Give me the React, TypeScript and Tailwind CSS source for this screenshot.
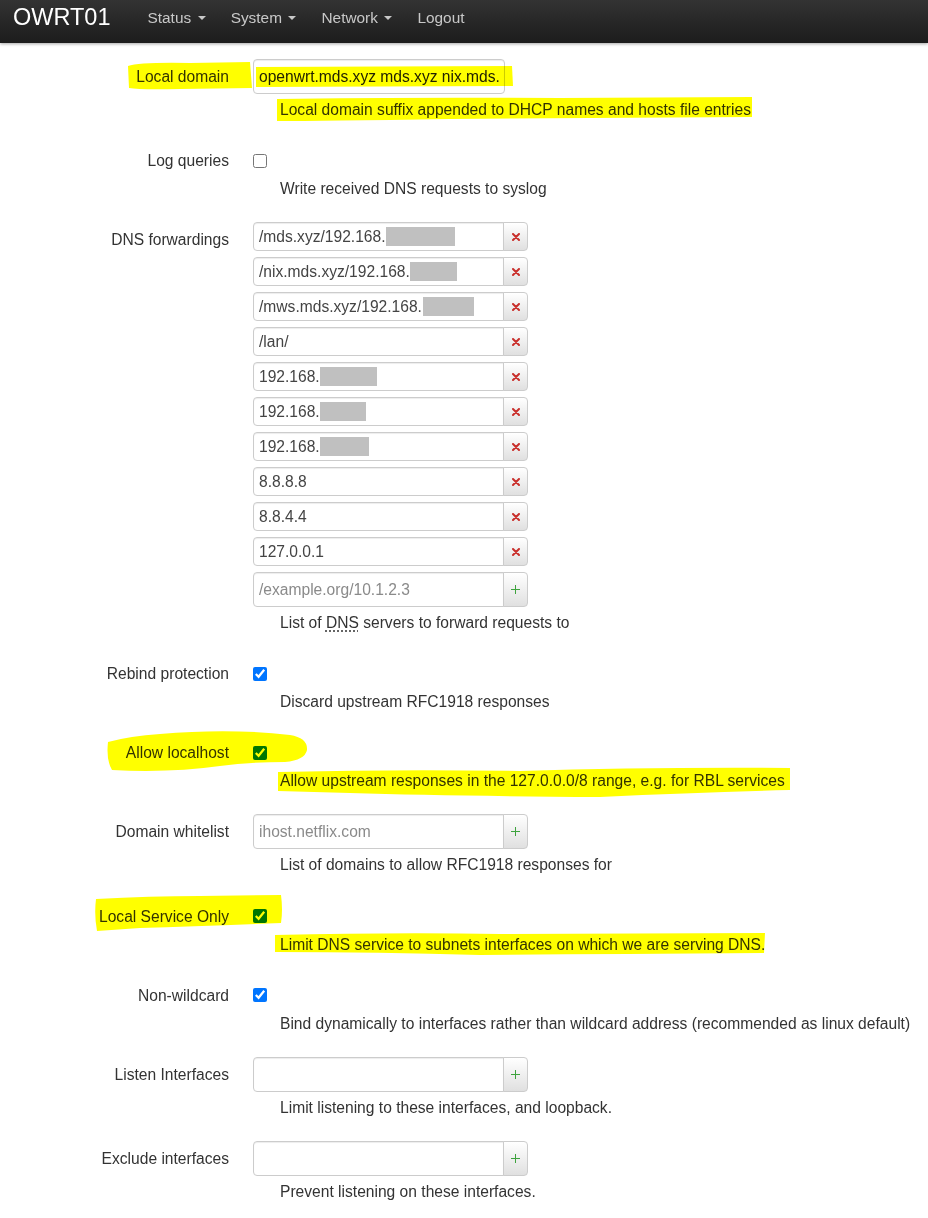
import React from "react";

const items: { text: string; block?: [number, number] }[] = [
    { text: "/mds.xyz/192.168.", block: [0, 69] },
    { text: "/nix.mds.xyz/192.168.", block: [0, 47] },
    { text: "/mws.mds.xyz/192.168.", block: [1, 51] },
    { text: "/lan/" },
    { text: "192.168.", block: [0, 57] },
    { text: "192.168.", block: [0, 46] },
    { text: "192.168.", block: [0, 49] },
    { text: "8.8.8.8" },
    { text: "8.8.4.4" },
    { text: "127.0.0.1" },
];

function RemoveIcon() {
    return (
        <svg width="8" height="8" viewBox="0 0 8 8">
            <path d="M1 1 L7 7 M7 1 L1 7" stroke="#c9302c" strokeWidth="2" strokeLinecap="round" />
        </svg>
    );
}

function AddIcon() {
    return (
        <svg width="9" height="9" viewBox="0 0 9 9" shapeRendering="crispEdges">
            <path d="M4 0 H5 V9 H4 Z M0 4 H9 V5 H0 Z" fill="#3ea33e" />
        </svg>
    );
}

function Btn({ add }: { add?: boolean }) {
    return (
        <div className="w-[25px] -ml-px flex items-center justify-center border border-[#ccc] rounded-r-[4px] bg-linear-to-b from-white to-[#e0e0e0]">
            {add ? <AddIcon /> : <RemoveIcon />}
        </div>
    );
}

function Field({
    children,
    tall,
    add,
    placeholder,
}: {
    children?: React.ReactNode;
    tall?: boolean;
    add?: boolean;
    placeholder?: string;
}) {
    return (
        <div className={`flex ${tall ? "h-[35px]" : "h-[29px]"}`}>
            <div className="w-[251px] flex items-center pl-[5px] border border-[#ccc] rounded-l-[4px] bg-white shadow-[inset_0_1px_1px_rgba(0,0,0,0.075)] text-[#444] whitespace-nowrap overflow-hidden">
                {placeholder ? <span className="text-[#8a8a8a]">{placeholder}</span> : children}
            </div>
            <Btn add={add} />
        </div>
    );
}

function Label({ children }: { children: React.ReactNode }) {
    return <div className="w-[229px] shrink-0 text-right leading-[35px] whitespace-nowrap">{children}</div>;
}

function Check({ checked }: { checked?: boolean }) {
    return (
        <div className="h-[35px] flex items-center">
            <input type="checkbox" defaultChecked={checked} className="w-[14px] h-[14px] m-0 accent-[#0075ff]" />
        </div>
    );
}

function Desc({ children, gap }: { children: React.ReactNode; gap?: boolean }) {
    return <div className={`pl-[280px] leading-[22px] whitespace-nowrap ${gap ? "mt-[5px]" : ""}`}>{children}</div>;
}

export default function App() {
    return (
        <div className="relative w-[928px] h-[1218px] overflow-hidden bg-white text-[#333] text-[15.6px] font-['Liberation_Sans',Arial,sans-serif]">
            <nav className="h-[43px] flex items-center pb-[8px] px-[13px] bg-linear-to-b from-[#333] to-[#1c1c1c] shadow-[0_1px_3px_rgba(0,0,0,0.35)]">
                <span className="text-white text-[23.5px] mr-[37px]">OWRT01</span>
                <div className="flex items-center gap-[25px] text-[15.4px] text-[#c8c8c8]">
                    {["Status", "System", "Network"].map((n) => (
                        <span key={n} className="flex items-center">
                            {n}
                            <span className="ml-[6.5px] mt-[2px] w-0 h-0 border-x-[4px] border-x-transparent border-t-[4px] border-t-[#c8c8c8]" />
                        </span>
                    ))}
                    <span>Logout</span>
                </div>
            </nav>

            <div className="flex flex-col gap-[22.1px] mt-[16px]">
                <div>
                    <div className="flex">
                        <Label>Local domain</Label>
                        <div className="ml-[24px] w-[252px] h-[35px] flex items-center pl-[5px] border border-[#ccc] rounded-[4px] shadow-[inset_0_1px_1px_rgba(0,0,0,0.075)] text-[#222] whitespace-nowrap overflow-hidden">
                            openwrt.mds.xyz mds.xyz nix.mds.
                        </div>
                    </div>
                    <Desc gap>Local domain suffix appended to DHCP names and hosts file entries</Desc>
                </div>

                <div>
                    <div className="flex">
                        <Label>Log queries</Label>
                        <div className="ml-[24px]">
                            <Check />
                        </div>
                    </div>
                    <Desc>Write received DNS requests to syslog</Desc>
                </div>

                <div>
                    <div className="flex">
                        <Label>DNS forwardings</Label>
                        <div className="ml-[24px] flex flex-col gap-[6px]">
                            {items.map((it, i) => (
                                <Field key={i}>
                                    {it.text}
                                    {it.block && (
                                        <span
                                            className="inline-block h-[19px] bg-[#c0c0c0]"
                                            style={{ marginLeft: it.block[0], width: it.block[1] }}
                                        />
                                    )}
                                </Field>
                            ))}
                            <Field tall add placeholder="/example.org/10.1.2.3" />
                        </div>
                    </div>
                    <Desc gap>
                        List of <span className="underline decoration-dotted underline-offset-[3px]">DNS</span> servers to forward requests to
                    </Desc>
                </div>

                <div>
                    <div className="flex">
                        <Label>Rebind protection</Label>
                        <div className="ml-[24px]">
                            <Check checked />
                        </div>
                    </div>
                    <Desc>Discard upstream RFC1918 responses</Desc>
                </div>

                <div>
                    <div className="flex">
                        <Label>Allow localhost</Label>
                        <div className="ml-[24px]">
                            <Check checked />
                        </div>
                    </div>
                    <Desc>Allow upstream responses in the 127.0.0.0/8 range, e.g. for RBL services</Desc>
                </div>

                <div>
                    <div className="flex">
                        <Label>Domain whitelist</Label>
                        <div className="ml-[24px]">
                            <Field tall add placeholder="ihost.netflix.com" />
                        </div>
                    </div>
                    <Desc gap>List of domains to allow RFC1918 responses for</Desc>
                </div>

                <div>
                    <div className="flex">
                        <Label>Local Service Only</Label>
                        <div className="ml-[24px]">
                            <Check checked />
                        </div>
                    </div>
                    <Desc>Limit DNS service to subnets interfaces on which we are serving DNS.</Desc>
                </div>

                <div>
                    <div className="flex">
                        <Label>Non-wildcard</Label>
                        <div className="ml-[24px]">
                            <Check checked />
                        </div>
                    </div>
                    <Desc>Bind dynamically to interfaces rather than wildcard address (recommended as linux default)</Desc>
                </div>

                <div>
                    <div className="flex">
                        <Label>Listen Interfaces</Label>
                        <div className="ml-[24px]">
                            <Field tall add />
                        </div>
                    </div>
                    <Desc gap>Limit listening to these interfaces, and loopback.</Desc>
                </div>

                <div>
                    <div className="flex">
                        <Label>Exclude interfaces</Label>
                        <div className="ml-[24px]">
                            <Field tall add />
                        </div>
                    </div>
                    <Desc gap>Prevent listening on these interfaces.</Desc>
                </div>
            </div>

            {/* highlighter marks laid over the page */}
            <svg
                className="absolute left-0 top-0 pointer-events-none mix-blend-multiply"
                width="928"
                height="1218"
                viewBox="0 0 928 1218"
            >
                <g fill="#ffff00">
                    <path d="M128 66 Q140 62 190 63 L250 62 L252 88 L180 89 Q140 90 129 88 Z" />
                    <path d="M256 67 L512 66 L513 86 L256 87 Z" />
                    <path d="M277 99 Q400 97 560 98 L752 97 L752 117 Q600 118 450 119 Q320 121 277 121 Z" />
                    <path d="M108 742 Q130 736 160 734 Q230 728 290 735 Q308 738 307 750 Q305 760 285 762 Q250 762 220 766 Q170 773 112 770 Q106 760 108 742 Z" />
                    <path d="M278 772 Q400 769 520 771 Q650 767 790 768 L790 790 Q700 792 600 797 Q450 796 350 793 L278 791 Z" />
                    <path d="M96 899 Q150 896 200 896 L281 895 Q283 910 281 923 Q200 926 140 928 L97 931 Q94 915 96 899 Z" />
                    <path d="M275 935 Q400 932 500 934 L765 933 L764 953 Q600 954 480 955 Q380 952 275 952 Z" />
                </g>
            </svg>
        </div>
    );
}
